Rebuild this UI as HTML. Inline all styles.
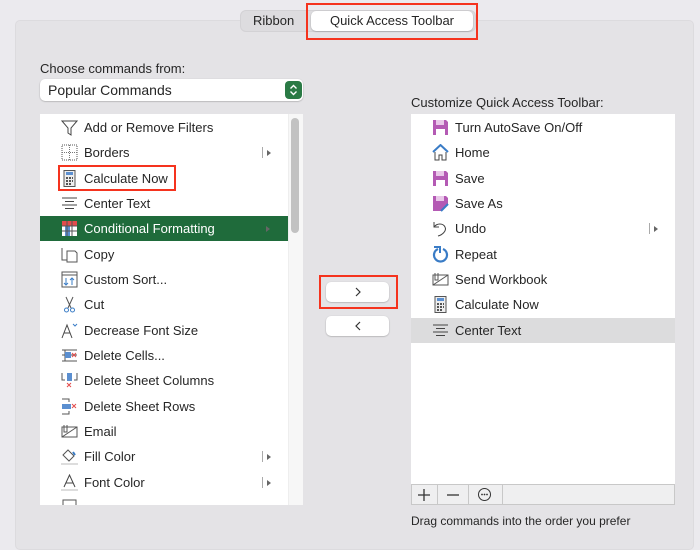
<!DOCTYPE html>
<html><head><meta charset="utf-8"><style>
*{margin:0;padding:0;box-sizing:border-box}
body{width:700px;height:544px;background:#ebeaee;font-family:"Liberation Sans",sans-serif;font-size:13px;color:#262626;position:relative;overflow:hidden}
.abs{position:absolute}
.panel{left:15px;top:20px;width:679px;height:530px;background:#e4e3e6;border:1px solid #dcdbde;border-radius:5px}
.seg{left:240px;top:10px;width:236px;height:22px;background:#dddcdf;border-radius:6px;border:1px solid #d3d2d5}
.red{border:2.5px solid #f5331e}
.list{background:#fff}
.row{position:absolute;left:0;height:25px;line-height:25px;width:100%}
.row span{position:absolute;left:44px}
.ico{position:absolute;left:21px;top:4px;width:17px;height:17px}
.arr{position:absolute;right:16px;top:7px;width:10px;height:11px;border-left:1px solid #aaa}
.arr:after{content:"";position:absolute;left:4px;top:3px;border-left:4px solid #666;border-top:3px solid transparent;border-bottom:3px solid transparent}
.btn{background:#fff;border-radius:5px;box-shadow:0 0.5px 1.5px rgba(0,0,0,.3);text-align:center}
</style></head><body>
<div class="abs panel"></div>
<div class="abs seg"></div>
<div class="abs" style="left:253px;top:13px;font-size:13px">Ribbon</div>
<div class="abs red" style="left:306px;top:3px;width:172px;height:37px"></div>
<div class="abs btn" style="left:311px;top:11px;width:162px;height:20px;line-height:20px">Quick Access Toolbar</div>

<div class="abs" style="left:40px;top:61px">Choose commands from:</div>
<div class="abs btn" style="left:40px;top:79px;width:263px;height:22px"></div>
<div class="abs" style="left:48px;top:82px;font-size:14px">Popular Commands</div>
<svg class="abs" style="left:285px;top:81px" width="17" height="18" viewBox="0 0 17 18"><rect width="17" height="18" rx="4" fill="#2a7a45"/><path d="M5.5 7.5l3-3 3 3M5.5 10.5l3 3 3-3" fill="none" stroke="#fff" stroke-width="1.4"/></svg>

<div class="abs list" style="left:40px;top:114px;width:263px;height:391px;overflow:hidden">
 <div class="abs" style="left:248px;top:0;width:15px;height:391px;background:#f7f7f7;border-left:1px solid #eee"></div>
 <div class="abs" style="left:251px;top:4px;width:8px;height:115px;background:#c2c2c2;border-radius:4px"></div>
 <div style="position:absolute;left:0;top:0;width:248px">
  <div class="row" style="top:1px"><svg class="ico" viewBox="0 0 17 17"><path d="M1 2h15l-6 7v7l-3-2V9z" fill="none" stroke="#444"/></svg><span>Add or Remove Filters</span></div>
  <div class="row" style="top:26px"><svg class="ico" viewBox="0 0 17 17"><rect x="1" y="1" width="15" height="15" fill="none" stroke="#555" stroke-dasharray="1 1"/><path d="M8.5 1v15M1 8.5h15" stroke="#777" stroke-dasharray="1 1"/></svg><span>Borders</span><i class="arr"></i></div>
  <div class="row" style="top:52px"><svg class="ico" viewBox="0 0 17 17"><rect x="3" y="0.5" width="11" height="16" fill="#eee" stroke="#555"/><rect x="5" y="2" width="7" height="3" fill="#5b8fd0"/><path d="M5 7h2v2H5zM8 7h2v2H8zM11 7h1v2h-1zM5 10h2v2H5zM8 10h2v2H8zM11 10h1v2h-1zM5 13h2v2H5zM8 13h2v2H8z" fill="#555"/></svg><span>Calculate Now</span></div>
  <div class="row" style="top:77px"><svg class="ico" viewBox="0 0 17 17"><path d="M1 3h15M4 6.5h9M1 10h15M4 13.5h9" stroke="#444"/></svg><span>Center Text</span></div>
  <div class="row" style="top:102px;background:#1f6b3b;color:#fff"><svg class="ico" viewBox="0 0 17 17"><rect x="1" y="1" width="15" height="15" fill="#fff"/><rect x="1" y="1" width="15" height="5" fill="#e34c4c"/><rect x="4" y="6" width="5" height="10" fill="#5b8fd0"/><path d="M1 6h15M1 11h15M6 1v15M11 1v15" stroke="#555"/></svg><span>Conditional Formatting</span><i class="arr" style="border:none"></i></div>
  <div class="row" style="top:128px"><svg class="ico" viewBox="0 0 17 17"><path d="M1 2v12h5M6 5h8l2 2v9H6z" fill="none" stroke="#555"/></svg><span>Copy</span></div>
  <div class="row" style="top:153px"><svg class="ico" viewBox="0 0 17 17"><rect x="1" y="1" width="15" height="15" fill="none" stroke="#555"/><path d="M1 4h15" stroke="#555"/><path d="M5 7v7M3 12l2 2 2-2M11 14V7M9 9l2-2 2 2" fill="none" stroke="#3a7cc6"/></svg><span>Custom Sort...</span></div>
  <div class="row" style="top:178px"><svg class="ico" viewBox="0 0 17 17"><path d="M5 1l5 11M12 1L7 12" stroke="#555"/><circle cx="5.5" cy="14" r="2" fill="none" stroke="#3a7cc6"/><circle cx="11.5" cy="14" r="2" fill="none" stroke="#3a7cc6"/></svg><span>Cut</span></div>
  <div class="row" style="top:204px"><svg class="ico" viewBox="0 0 17 17"><path d="M1 16L6 3l5 13M3 11h6" fill="none" stroke="#444"/><path d="M12 2l2 2 2-2" fill="none" stroke="#3a7cc6"/></svg><span>Decrease Font Size</span></div>
  <div class="row" style="top:229px"><svg class="ico" viewBox="0 0 17 17"><path d="M1 3h15M1 8h15M1 14h15M4 3v11" stroke="#555"/><rect x="4" y="5" width="6" height="6" fill="#5b8fd0"/><path d="M11 6l4 4M15 6l-4 4" stroke="#e34c4c"/></svg><span>Delete Cells...</span></div>
  <div class="row" style="top:254px"><svg class="ico" viewBox="0 0 17 17"><path d="M1 1v7h3M16 1v7h-3" fill="none" stroke="#555"/><rect x="6" y="1" width="5" height="8" fill="#5b8fd0"/><path d="M6 11l4 4M10 11l-4 4" stroke="#e34c4c"/></svg><span>Delete Sheet Columns</span></div>
  <div class="row" style="top:280px"><svg class="ico" viewBox="0 0 17 17"><path d="M1 1h7v3M1 16h7v-3" fill="none" stroke="#555"/><rect x="1" y="6" width="9" height="5" fill="#5b8fd0"/><path d="M11 6l4 4M15 6l-4 4" stroke="#e34c4c"/></svg><span>Delete Sheet Rows</span></div>
  <div class="row" style="top:305px"><svg class="ico" viewBox="0 0 17 17"><rect x="1" y="4" width="15" height="10" fill="none" stroke="#555"/><path d="M1 14L16 4" stroke="#555"/><path d="M3 2v7h3V2" fill="none" stroke="#555"/></svg><span>Email</span></div>
  <div class="row" style="top:330px"><svg class="ico" viewBox="0 0 17 17"><path d="M2 7l5-5 6 6-5 5z" fill="none" stroke="#555"/><path d="M12 4l2 3" stroke="#3a7cc6" stroke-width="2"/><rect x="0" y="15" width="17" height="2" fill="#ddd"/></svg><span>Fill Color</span><i class="arr"></i></div>
  <div class="row" style="top:356px"><svg class="ico" viewBox="0 0 17 17"><path d="M3 13L8.5 1 14 13M5 9h7" fill="none" stroke="#444"/><rect x="0" y="15" width="17" height="2" fill="#ddd"/></svg><span>Font Color</span><i class="arr"></i></div>
  <div class="row" style="top:381px"><svg class="ico" viewBox="0 0 17 17"><rect x="2" y="1" width="13" height="12" fill="none" stroke="#555"/></svg></div>
 </div>
</div>
<div class="abs red" style="left:58px;top:165px;width:118px;height:26px"></div>

<div class="abs red" style="left:319px;top:275px;width:79px;height:34px"></div>
<div class="abs btn" style="left:326px;top:282px;width:63px;height:20px"><svg width="10" height="20" viewBox="0 0 10 20"><path d="M3 6l4 4-4 4" fill="none" stroke="#333" stroke-width="1.2"/></svg></div>
<div class="abs btn" style="left:326px;top:316px;width:63px;height:20px"><svg width="10" height="20" viewBox="0 0 10 20"><path d="M7 6l-4 4 4 4" fill="none" stroke="#333" stroke-width="1.2"/></svg></div>

<div class="abs" style="left:411px;top:95px">Customize Quick Access Toolbar:</div>
<div class="abs list" style="left:411px;top:114px;width:264px;height:370px">
  <div class="row" style="top:1px"><svg class="ico" viewBox="0 0 17 17"><path d="M1 1h13l2 2v13H1z" fill="#b45ab4"/><rect x="4" y="1" width="8" height="5" fill="#e9c8e9"/><rect x="4" y="10" width="9" height="6" fill="#fff"/></svg><span>Turn AutoSave On/Off</span></div>
  <div class="row" style="top:26px"><svg class="ico" viewBox="0 0 17 17"><path d="M1 8l7.5-7 7.5 7" fill="none" stroke="#3a7cc6" stroke-width="2"/><path d="M3 8v8h4v-5h3v5h4V8" fill="none" stroke="#444"/></svg><span>Home</span></div>
  <div class="row" style="top:52px"><svg class="ico" viewBox="0 0 17 17"><path d="M1 1h13l2 2v13H1z" fill="#b45ab4"/><rect x="4" y="1" width="8" height="5" fill="#e9c8e9"/><rect x="4" y="10" width="9" height="6" fill="#fff"/></svg><span>Save</span></div>
  <div class="row" style="top:77px"><svg class="ico" viewBox="0 0 17 17"><path d="M1 1h13l2 2v6l-7 7H1z" fill="#b45ab4"/><rect x="4" y="1" width="8" height="5" fill="#e9c8e9"/><path d="M9 16l7-7" stroke="#3a7cc6" stroke-width="2"/></svg><span>Save As</span></div>
  <div class="row" style="top:102px"><svg class="ico" viewBox="0 0 17 17"><path d="M2 2v5h5M2 7c3-4 9-4 11 0s-3 8-7 9" fill="none" stroke="#444"/></svg><span>Undo</span><i class="arr"></i></div>
  <div class="row" style="top:128px"><svg class="ico" viewBox="0 0 17 17"><path d="M6 3a6.5 6.5 0 1 0 5 0" fill="none" stroke="#3a7cc6" stroke-width="2.2"/><path d="M2 1h6v6" fill="none" stroke="#3a7cc6" stroke-width="2"/></svg><span>Repeat</span></div>
  <div class="row" style="top:153px"><svg class="ico" viewBox="0 0 17 17"><rect x="1" y="4" width="15" height="10" fill="none" stroke="#555"/><path d="M1 14L16 4" stroke="#555"/><path d="M3 2v7h3V2" fill="none" stroke="#555"/></svg><span>Send Workbook</span></div>
  <div class="row" style="top:178px"><svg class="ico" viewBox="0 0 17 17"><rect x="3" y="0.5" width="11" height="16" fill="#eee" stroke="#555"/><rect x="5" y="2" width="7" height="3" fill="#5b8fd0"/><path d="M5 7h2v2H5zM8 7h2v2H8zM11 7h1v2h-1zM5 10h2v2H5zM8 10h2v2H8zM11 10h1v2h-1zM5 13h2v2H5zM8 13h2v2H8z" fill="#555"/></svg><span>Calculate Now</span></div>
  <div class="row" style="top:204px;background:#dcdcdd"><svg class="ico" viewBox="0 0 17 17"><path d="M1 3h15M4 6.5h9M1 10h15M4 13.5h9" stroke="#444"/></svg><span>Center Text</span></div>
</div>
<div class="abs" style="left:411px;top:484px;width:264px;height:21px;background:#efeff0;border:1px solid #c8c8c8"></div>
<div class="abs" style="left:437px;top:484px;width:1px;height:21px;background:#c8c8c8"></div>
<div class="abs" style="left:468px;top:484px;width:1px;height:21px;background:#c8c8c8"></div>
<div class="abs" style="left:502px;top:484px;width:1px;height:21px;background:#c8c8c8"></div>
<svg class="abs" style="left:417px;top:488px" width="14" height="14" viewBox="0 0 14 14"><path d="M7 1v12M1 7h12" stroke="#333" stroke-width="1.3"/></svg>
<svg class="abs" style="left:446px;top:488px" width="14" height="14" viewBox="0 0 14 14"><path d="M1 7h12" stroke="#333" stroke-width="1.3"/></svg>
<svg class="abs" style="left:477px;top:487px" width="15" height="15" viewBox="0 0 15 15"><circle cx="7.5" cy="7.5" r="6" fill="none" stroke="#333"/><circle cx="5" cy="7.5" r="0.9" fill="#333"/><circle cx="7.5" cy="7.5" r="0.9" fill="#333"/><circle cx="10" cy="7.5" r="0.9" fill="#333"/></svg>
<div class="abs" style="left:411px;top:514px;font-size:12px">Drag commands into the order you prefer</div>
</body></html>
